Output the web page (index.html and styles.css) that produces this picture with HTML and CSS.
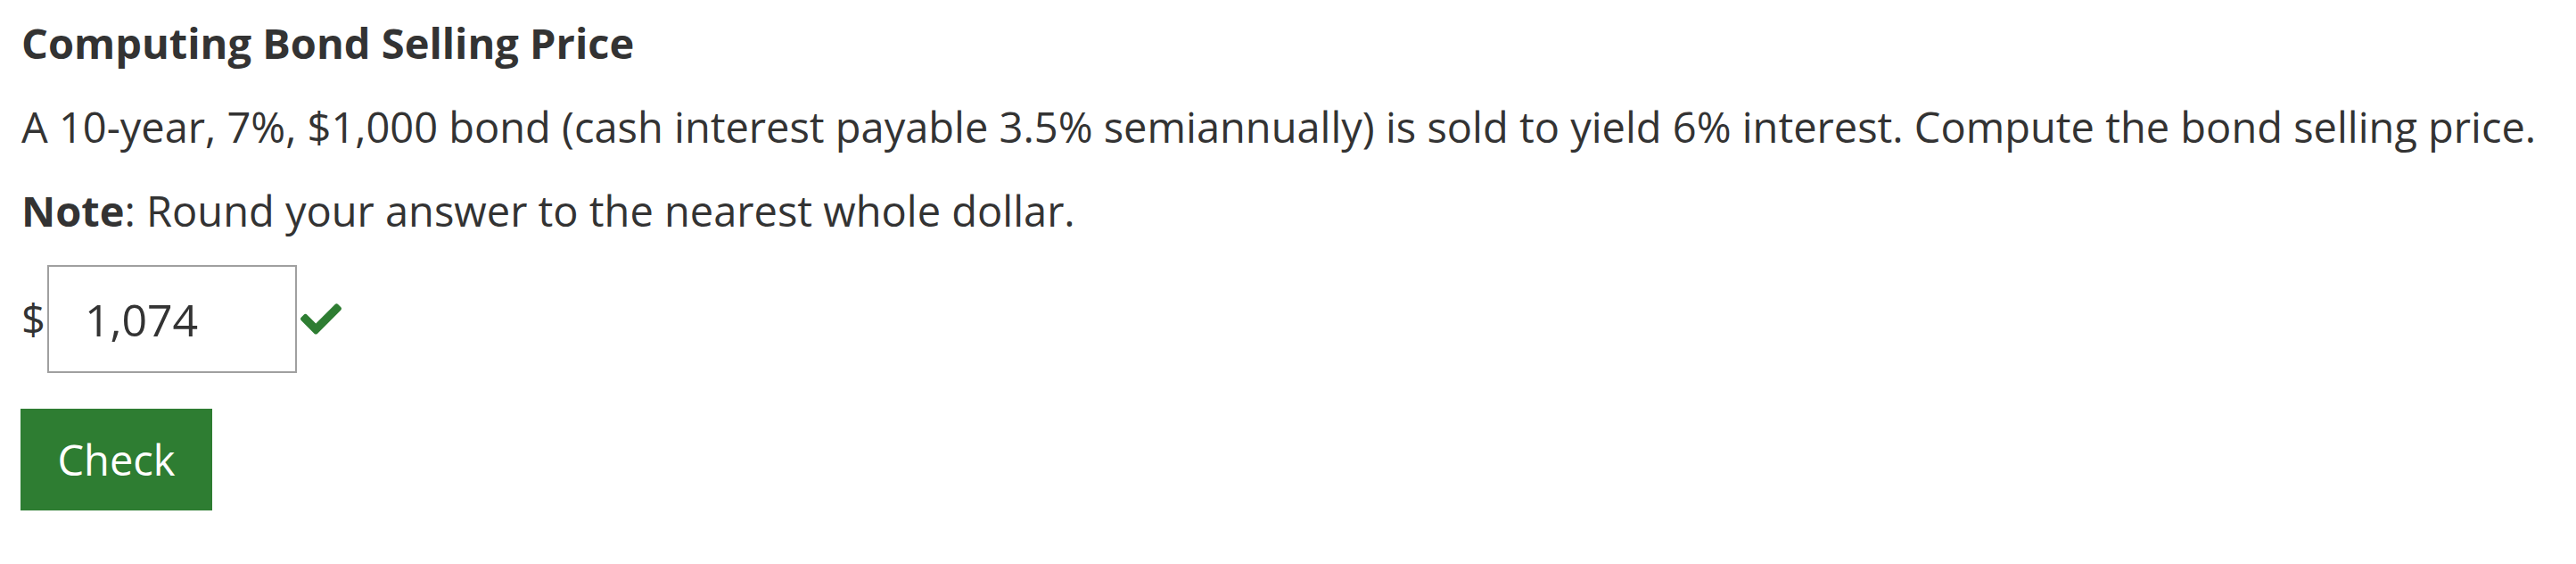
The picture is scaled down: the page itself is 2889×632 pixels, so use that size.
FILE: index.html
```html
<!DOCTYPE html>
<html lang="en">
<head>
<meta charset="utf-8">
<title>Computing Bond Selling Price</title>
<link rel="stylesheet" href="styles.css">
</head>
<body>
<main class="page">
  <h1 class="title">Computing Bond Selling Price</h1>
  <p class="text">A 10-year, 7%, $1,000 bond (cash interest payable 3.5% semiannually) is sold to yield 6% interest. Compute the bond selling price.</p>
  <p class="text"><strong>Note</strong>: Round your answer to the nearest whole dollar.</p>
  <div class="answer-row">
    <span class="currency">$</span>
    <input class="answer" type="text" value="1,074" aria-label="Bond selling price">
    <svg class="check-icon" viewBox="0 72 512 370" aria-hidden="true"><path d="M173.898 439.404l-166.4-166.4c-9.997-9.997-9.997-26.206 0-36.204l36.203-36.204c9.997-9.998 26.207-9.998 36.204 0L192 312.69 432.095 72.596c9.997-9.997 26.207-9.997 36.204 0l36.203 36.204c9.997 9.997 9.997 26.206 0 36.204l-294.4 294.401c-9.998 9.997-26.207 9.997-36.204-.001z"/></svg>
  </div>
  <button class="check-btn" type="button">Check</button>
</main>
</body>
</html>
```

FILE: styles.css
```css
html, body {
  margin: 0;
  padding: 0;
  background: #ffffff;
}

body {
  font-family: "Open Sans", "Noto Sans", "Liberation Sans", sans-serif;
  font-size: 47px;
  line-height: 66px;
  color: #333333;
}

.page {
  padding: 15px 24px 0 24px;
}

.title {
  margin: 0;
  font-size: 47px;
  font-weight: 700;
  line-height: 66px;
  color: #333333;
}

.text {
  margin: 28px 0 0 0;
}

.text strong {
  font-weight: 700;
}

.answer-row {
  display: flex;
  align-items: center;
  margin-top: 28px;
}

.currency {
  line-height: 1;
  margin-right: 2px;
}

.answer {
  box-sizing: border-box;
  width: 280px;
  height: 121px;
  margin: 0;
  padding: 0 0 0 40px;
  border: 2px solid #a0a0a0;
  border-radius: 0;
  font-family: inherit;
  font-size: 50px;
  color: #333333;
  background: #ffffff;
  outline: none;
}

.check-icon {
  width: 46px;
  height: 35px;
  margin-left: 4px;
  fill: #2e7d32;
}

.check-btn {
  display: block;
  box-sizing: border-box;
  width: 215px;
  height: 114px;
  margin: 40px 0 0 -1px;
  padding: 0;
  border: none;
  border-radius: 0;
  background: #2e7d32;
  color: #ffffff;
  font-family: inherit;
  font-size: 47px;
  line-height: 1;
}
```
